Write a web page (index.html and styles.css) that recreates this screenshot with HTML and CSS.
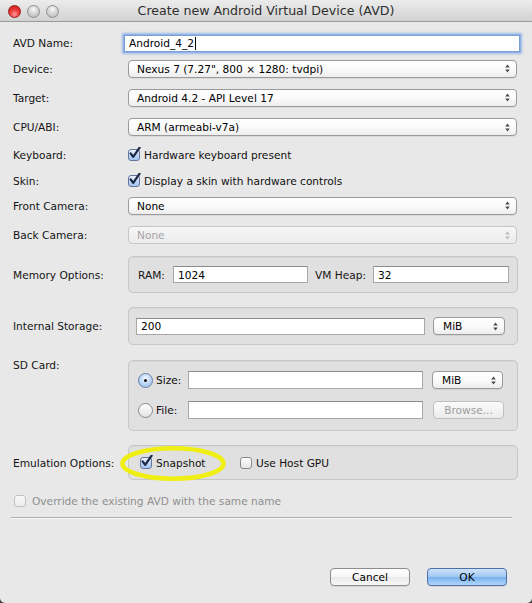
FILE: index.html
```html
<!DOCTYPE html>
<html>
<head>
<meta charset="utf-8">
<title>Create new Android Virtual Device (AVD)</title>
<link rel="stylesheet" href="styles.css">
</head>
<body>
<div class="window">
  <div class="titlebar">
    <div class="lights"><span class="light red"></span><span class="light"></span><span class="light"></span></div>
    <div class="title">Create new Android Virtual Device (AVD)</div>
    <div></div>
  </div>

  <div class="content">
    <div class="fields">
      <div class="lbl">AVD Name:</div>
      <div class="ctl"><div class="field focus">Android_4_2<span class="caret"></span></div></div>

      <div class="lbl">Device:</div>
      <div class="ctl"><div class="select"><span>Nexus 7 (7.27", 800 × 1280: tvdpi)</span><svg class="arr" width="5" height="9" viewBox="0 0 5 9"><path d="M2.5 0.5L4.8 3.5H0.2Z M0.2 5.5H4.8L2.5 8.5Z"/></svg></div></div>

      <div class="lbl">Target:</div>
      <div class="ctl"><div class="select"><span>Android 4.2 - API Level 17</span><svg class="arr" width="5" height="9" viewBox="0 0 5 9"><path d="M2.5 0.5L4.8 3.5H0.2Z M0.2 5.5H4.8L2.5 8.5Z"/></svg></div></div>

      <div class="lbl">CPU/ABI:</div>
      <div class="ctl"><div class="select"><span>ARM (armeabi-v7a)</span><svg class="arr" width="5" height="9" viewBox="0 0 5 9"><path d="M2.5 0.5L4.8 3.5H0.2Z M0.2 5.5H4.8L2.5 8.5Z"/></svg></div></div>

      <div class="lbl">Keyboard:</div>
      <div class="ctl"><label class="check"><span class="cb on"><svg class="tick" width="14" height="14" viewBox="0 0 14 14"><path d="M2.6 6.4L5.2 9.8L11.6 0.6"/></svg></span>Hardware keyboard present</label></div>

      <div class="lbl">Skin:</div>
      <div class="ctl"><label class="check"><span class="cb on"><svg class="tick" width="14" height="14" viewBox="0 0 14 14"><path d="M2.6 6.4L5.2 9.8L11.6 0.6"/></svg></span>Display a skin with hardware controls</label></div>

      <div class="lbl">Front Camera:</div>
      <div class="ctl"><div class="select"><span>None</span><svg class="arr" width="5" height="9" viewBox="0 0 5 9"><path d="M2.5 0.5L4.8 3.5H0.2Z M0.2 5.5H4.8L2.5 8.5Z"/></svg></div></div>

      <div class="lbl">Back Camera:</div>
      <div class="ctl"><div class="select disabled"><span>None</span><svg class="arr" width="5" height="9" viewBox="0 0 5 9"><path d="M2.5 0.5L4.8 3.5H0.2Z M0.2 5.5H4.8L2.5 8.5Z"/></svg></div></div>
    </div>

    <div class="section sec-memory">
      <div class="lbl">Memory Options:</div>
      <div class="group memory">
        <span class="mlabel ram">RAM:</span>
        <div class="field w-ram">1024</div>
        <span class="mlabel heap">VM Heap:</span>
        <div class="field w-heap">32</div>
      </div>
    </div>

    <div class="section sec-storage">
      <div class="lbl">Internal Storage:</div>
      <div class="group storage">
        <div class="field w-storage">200</div>
        <div class="select unit"><span>MiB</span><svg class="arr" width="5" height="9" viewBox="0 0 5 9"><path d="M2.5 0.5L4.8 3.5H0.2Z M0.2 5.5H4.8L2.5 8.5Z"/></svg></div>
      </div>
    </div>

    <div class="section sec-sd">
      <div class="lbl top">SD Card:</div>
      <div class="group sd">
        <div class="sdrow">
          <label class="radio"><span class="rb on"></span>Size:</label>
          <div class="field w-sd"></div>
          <div class="select unit"><span>MiB</span><svg class="arr" width="5" height="9" viewBox="0 0 5 9"><path d="M2.5 0.5L4.8 3.5H0.2Z M0.2 5.5H4.8L2.5 8.5Z"/></svg></div>
        </div>
        <div class="sdrow">
          <label class="radio"><span class="rb"></span>File:</label>
          <div class="field w-sd"></div>
          <div class="btn browse">Browse...</div>
        </div>
      </div>
    </div>

    <div class="section sec-emu">
      <div class="lbl">Emulation Options:</div>
      <div class="group emu">
        <label class="check opt"><span class="cb on"><svg class="tick" width="14" height="14" viewBox="0 0 14 14"><path d="M2.6 6.4L5.2 9.8L11.6 0.6"/></svg></span>Snapshot</label>
        <label class="check"><span class="cb"></span>Use Host GPU</label>
        <svg class="highlight" width="106" height="35" viewBox="0 0 106 35"><ellipse cx="53" cy="17.5" rx="50.5" ry="15.2"/></svg>
      </div>
    </div>

    <div class="override">
      <label class="check disabled"><span class="cb off"></span>Override the existing AVD with the same name</label>
    </div>

    <div class="separator"></div>

    <div class="buttons">
      <div class="btn">Cancel</div>
      <div class="btn ok">OK</div>
    </div>
  </div>
</div>
</body>
</html>
```

FILE: styles.css
```css
html, body {
  margin: 0;
  padding: 0;
}
body {
  width: 532px;
  height: 603px;
  overflow: hidden;
  background: #3b3b3b;
  font-family: "DejaVu Sans", "Liberation Sans", sans-serif;
  font-size: 10.6px;
  color: #111;
}

.window {
  width: 532px;
  height: 603px;
  background: #e8e8e8;
  border-radius: 0 0 5px 5px;
  overflow: hidden;
  display: flex;
  flex-direction: column;
}

/* title bar */
.titlebar {
  height: 21px;
  border-bottom: 1px solid #9b9b9b;
  background: linear-gradient(#ececec, #d2d2d2);
  display: grid;
  grid-template-columns: 1fr auto 1fr;
  align-items: center;
}
.lights {
  display: flex;
  gap: 6px;
  padding-left: 8px;
  padding-top: 1px;
}
.light {
  width: 13px;
  height: 13px;
  box-sizing: border-box;
  border-radius: 50%;
  border: 1px solid #8f8f8f;
  background: radial-gradient(circle at 50% 30%, #fafafa 0, #d6d6d6 45%, #b3b3b3 100%);
}
.light.red {
  border-color: #9a1c1c;
  background: radial-gradient(circle at 50% 75%, #ff9a9a 0, #ee3b3b 45%, #c31616 100%);
}
.title {
  font-size: 12.6px;
  color: #2f2f2f;
  white-space: nowrap;
}

/* content */
.content {
  padding: 8px 14px 0 13px;
  display: flex;
  flex-direction: column;
}
.fields {
  display: grid;
  grid-template-columns: 115px 1fr;
  grid-template-rows: 26px 25px 33px 26px 30px 21px 29px 30px;
  align-items: center;
}
.lbl {
  line-height: 13px;
  padding-top: 1px;
  color: #141414;
  white-space: nowrap;
}
.ctl {
  display: flex;
  align-items: center;
}

/* text field */
.field {
  height: 17px;
  box-sizing: border-box;
  border: 1px solid #a8a8a8;
  border-top-color: #8c8c8c;
  background: #fff;
  padding-left: 4px;
  display: flex;
  align-items: center;
  color: #000;
  white-space: nowrap;
}
.field.focus {
  flex: 1;
  margin: 0 -2px 0 -4px;
  border-color: #7c9fd6;
  box-shadow: 0 0 0 1px #8fb3e6, 0 0 2px 2px rgba(120, 165, 230, 0.65);
}
.caret {
  display: inline-block;
  width: 1px;
  height: 13px;
  background: #000;
  margin-left: 1px;
}

/* popup select */
.select {
  flex: 1;
  height: 18px;
  box-sizing: border-box;
  margin-right: 1px;
  border: 1px solid #9a9a9a;
  border-radius: 4px;
  background: linear-gradient(#ffffff, #fbfbfb 50%, #ededed);
  box-shadow: 0 1px 0 rgba(0, 0, 0, 0.06);
  display: flex;
  align-items: center;
  justify-content: space-between;
  padding: 0 6px 0 8px;
  color: #000;
  white-space: nowrap;
}
.arr {
  fill: #4a4a4a;
  flex: none;
}
.select.disabled {
  color: #a4a4a4;
  border-color: #c6c6c6;
  background: linear-gradient(#f6f6f6, #ececec);
  box-shadow: none;
}
.select.disabled .arr {
  fill: #b8b8b8;
}
.select.unit {
  flex: none;
  width: 72px;
  margin-right: 0;
  padding-left: 9px;
}

/* checkbox */
.check {
  display: flex;
  align-items: center;
  gap: 4px;
  white-space: nowrap;
  color: #111;
}
.cb {
  position: relative;
  width: 12px;
  height: 12px;
  box-sizing: border-box;
  border-radius: 3px;
  border: 1px solid #8a8a8a;
  background: linear-gradient(#ffffff, #e4e4e4);
  flex: none;
}
.cb.on {
  border-color: #66769a;
  background: linear-gradient(#eef4fc, #bcd5f3 55%, #a3c4ee);
}
.tick {
  position: absolute;
  left: -1px;
  top: -3px;
  fill: none;
  stroke: #1b2644;
  stroke-width: 2.2;
  stroke-linecap: round;
  stroke-linejoin: round;
}
.check.disabled {
  color: #8f8f8f;
}
.cb.off {
  border-color: #c2c2c2;
  background: linear-gradient(#f8f8f8, #ececec);
}

/* group sections */
.section {
  display: grid;
  grid-template-columns: 115px 1fr;
  align-items: center;
}
.group {
  box-sizing: border-box;
  border: 1px solid #c7c7c7;
  border-radius: 5px;
  background: #e0e0e0;
  box-shadow: inset 0 1px 1px rgba(0, 0, 0, 0.04);
}
.sec-memory { margin-top: 6px; }
.sec-storage { margin-top: 14px; }
.sec-sd { margin-top: 15px; align-items: start; }
.sec-emu { margin-top: 14px; }

.memory {
  height: 37px;
  display: flex;
  align-items: center;
  padding-left: 9px;
}
.mlabel { white-space: nowrap; color: #141414; }
.ram { width: 35px; }
.heap { width: 58px; margin-left: 7px; }
.w-ram { width: 135px; }
.w-heap { width: 136px; }

.storage {
  height: 38px;
  display: flex;
  align-items: center;
  padding-left: 7px;
  gap: 8px;
}
.w-storage { width: 289px; }

.lbl.top { margin-top: -2px; }
.sd {
  height: 71px;
  padding: 10px 0 0 9px;
  display: flex;
  flex-direction: column;
  gap: 12px;
}
.sdrow {
  height: 18px;
  display: flex;
  align-items: center;
}
.radio {
  width: 50px;
  display: flex;
  align-items: center;
  gap: 3px;
  color: #111;
}
.rb {
  position: relative;
  width: 15px;
  height: 15px;
  box-sizing: border-box;
  border-radius: 50%;
  border: 1px solid #8b8b8b;
  background: linear-gradient(#ffffff, #e2e2e2);
  flex: none;
}
.rb.on {
  border-color: #6a7ea3;
  background: radial-gradient(circle at 50% 35%, #f3f8ff 0, #b9d4f4 55%, #93b9ea 100%);
}
.rb.on::after {
  content: "";
  position: absolute;
  left: 5px;
  top: 5px;
  width: 3px;
  height: 3px;
  border-radius: 50%;
  background: #111;
}
.w-sd { width: 235px; height: 18px; }
.sdrow .select.unit { width: 71px; margin-left: 9px; }

.emu {
  position: relative;
  height: 35px;
  display: flex;
  align-items: center;
  padding-left: 11px;
}
.opt { width: 100px; }
.highlight {
  position: absolute;
  left: -9px;
  top: 0px;
  fill: none;
  stroke: #f0ef14;
  stroke-width: 4.6;
}

.override {
  height: 20px;
  margin-top: 11px;
  display: flex;
  align-items: center;
  padding-left: 1px;
}
.override .check { gap: 6px; }

.separator {
  margin: 6px 6px 0 -2px;
  border-top: 1px solid #aeaeae;
  border-bottom: 1px solid #f6f6f6;
}

/* buttons */
.buttons {
  margin-top: 49px;
  display: flex;
  justify-content: flex-end;
  gap: 17px;
  padding-right: 11px;
}
.btn {
  width: 80px;
  height: 18px;
  box-sizing: border-box;
  border: 1px solid #8d8d8d;
  border-radius: 4px;
  background: linear-gradient(#ffffff, #f6f6f6 50%, #e9e9e9 51%, #f7f7f7);
  text-align: center;
  line-height: 16px;
  color: #000;
  box-shadow: 0 1px 0 rgba(0, 0, 0, 0.08);
}
.btn.ok {
  border-color: #4f70a8;
  background: linear-gradient(#cfe4fb, #9fc8f4 50%, #78b0ef 51%, #b0d6fa);
}
.btn.browse {
  width: 71px;
  margin-left: 10px;
  color: #9d9d9d;
  border-color: #bfbfbf;
  background: linear-gradient(#fbfbfb, #ececec);
  box-shadow: none;
}
```
